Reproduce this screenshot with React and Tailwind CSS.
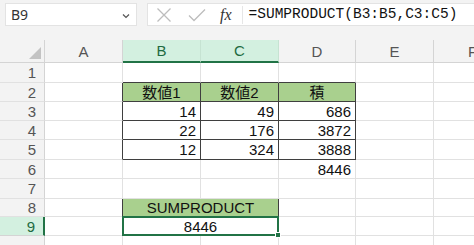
import React from 'react';

const cols = ['A', 'B', 'C', 'D', 'E', 'F'];

const cellFont = { fontFamily: '"Liberation Sans", "Noto Sans CJK JP", sans-serif' };

// data keyed by row -> col
const cells = {
  2: { B: '数値1', C: '数値2', D: '積' },
  3: { B: '14', C: '49', D: '686' },
  4: { B: '22', C: '176', D: '3872' },
  5: { B: '12', C: '324', D: '3888' },
  6: { D: '8446' },
};

const inTable = (r, c) => r >= 2 && r <= 5 && ['B', 'C', 'D'].includes(c);

const Cell = ({ r, c }) => {
  const value = cells[r]?.[c];
  const table = inTable(r, c);
  const header = r === 2 && table;
  // right border dark if this cell or the one to the right is in the table
  const next = cols[cols.indexOf(c) + 1];
  const darkRight = table || (next && inTable(r, next));
  const darkBottom = table || inTable(r + 1, c);
  return (
    <div
      className={`flex items-center px-1 text-[15px] leading-none text-[#111] border-r border-b ${
        darkRight ? 'border-r-[#3f3f3f]' : 'border-r-[#e1e1e1]'
      } ${darkBottom ? 'border-b-[#3f3f3f]' : 'border-b-[#e1e1e1]'} ${
        header ? 'bg-[#a9d08e] justify-center' : 'bg-white justify-end'
      }`}
      style={cellFont}
    >
      {value}
    </div>
  );
};

const RowHead = ({ n, active }) => (
  <div
    className={`flex items-center justify-end pr-[8px] text-[15px] leading-none border-b ${
      active
        ? 'bg-[#d3f0e0] text-[#1e6b41] border-r-2 border-r-[#217346] border-b-[#d4d4d4]'
        : 'bg-[#f3f3f3] text-[#555] border-r border-r-[#d4d4d4] border-b-[#e1e1e1]'
    }`}
    style={cellFont}
  >
    {n}
  </div>
);

export default function App() {
  return (
    <div className="w-[474px] h-[245px] overflow-hidden bg-[#f3f3f3]">
      {/* formula bar */}
      <div className="flex h-[40px] pt-[3px] pb-[14px]">
        <div className="ml-[5px] w-[132px] flex items-center justify-between bg-white border border-[#e3e3e3] pl-[5px] pr-[6px]">
          <span className="text-[14px] text-[#333]" style={{ fontFamily: '"Noto Sans", sans-serif' }}>B9</span>
          <svg width="8" height="6" viewBox="0 0 8 6" className="mt-[2px]">
            <path d="M1 1.5 L4 4.5 L7 1.5" stroke="#555" strokeWidth="1.2" fill="none" />
          </svg>
        </div>
        <div className="ml-[10px] flex-1 flex items-center bg-white border border-[#e3e3e3] border-r-0">
          <svg width="16" height="16" viewBox="0 0 16 16" className="ml-[8px]">
            <path d="M1.5 1.5 L14.5 14.5 M14.5 1.5 L1.5 14.5" stroke="#bdbdbd" strokeWidth="1.3" />
          </svg>
          <svg width="18" height="14" viewBox="0 0 18 14" className="ml-[16px]">
            <path d="M1 7.5 L6 12.5 L17 1.5" stroke="#bdbdbd" strokeWidth="1.3" fill="none" />
          </svg>
          <span
            className="ml-[14px] text-[16px] italic text-[#333]"
            style={{ fontFamily: '"Liberation Serif", serif' }}
          >
            fx
          </span>
          <div className="ml-[10px] h-[18px] w-px bg-[#e6e6e6]" />
          <span
            className="ml-[6px] text-[14.5px] text-[#111] whitespace-nowrap"
            style={{ fontFamily: '"Liberation Mono", monospace' }}
          >
            =SUMPRODUCT(B3:B5,C3:C5)
          </span>
        </div>
      </div>

      {/* sheet */}
      <div className="grid grid-cols-[45px_78px_78px_78px_77px_78px_78px] grid-rows-[23px_20px_19px_19px_19px_20px_19px_20px_18px_19px_19px] bg-white">
        <div className="bg-[#f3f3f3] border-r border-b border-[#d4d4d4] flex items-end justify-end pr-[3px] pb-[3px]">
          <svg width="12" height="12" viewBox="0 0 12 12">
            <path d="M12 0 L12 12 L0 12 Z" fill="#c3c3c3" />
          </svg>
        </div>
        {cols.map((c) => (
          <div
            key={c}
            className={`flex items-center justify-center text-[15px] leading-none ${
              c === 'B' || c === 'C'
                ? 'bg-[#d3f0e0] text-[#1e6b41] border-r border-r-[#c6e3d2] border-b-2 border-b-[#217346]'
                : 'bg-[#f3f3f3] text-[#555] border-r border-r-[#d4d4d4] border-b border-b-[#d4d4d4]'
            }`}
            style={cellFont}
          >
            {c}
          </div>
        ))}

        {[1, 2, 3, 4, 5, 6, 7].map((r) => (
          <React.Fragment key={r}>
            <RowHead n={r} />
            {cols.map((c) => (
              <Cell key={c} r={r} c={c} />
            ))}
          </React.Fragment>
        ))}

        {/* row 8 */}
        <RowHead n={8} />
        <div className="border-r border-b border-r-[#3f3f3f] border-b-[#e1e1e1] bg-white" />
        <div
          className="col-span-2 flex items-center justify-center bg-[#a9d08e] border-r border-b border-[#3f3f3f] text-[15px] leading-none text-[#111]"
          style={cellFont}
        >
          SUMPRODUCT
        </div>
        <div className="border-r border-b border-[#e1e1e1] bg-white" />
        <div className="border-r border-b border-[#e1e1e1] bg-white" />
        <div className="border-r border-b border-[#e1e1e1] bg-white" />

        {/* row 9 */}
        <RowHead n={9} active />
        <div className="border-r border-b border-[#e1e1e1] bg-white" />
        <div
          className="relative col-span-2 flex items-center justify-center bg-white border-2 border-[#217346] -ml-px -mt-px text-[15px] leading-none text-[#111]"
          style={cellFont}
        >
          8446
          <div className="absolute -right-[4px] -bottom-[4px] w-[6px] h-[6px] bg-[#217346] border border-white" />
        </div>
        <div className="border-r border-b border-[#e1e1e1] bg-white" />
        <div className="border-r border-b border-[#e1e1e1] bg-white" />
        <div className="border-r border-b border-[#e1e1e1] bg-white" />

        {/* row 10, only its top edge shows */}
        <RowHead n="" />
        {cols.map((c) => (
          <div key={c} className="border-r border-b border-[#e1e1e1] bg-white" />
        ))}
      </div>
    </div>
  );
}
